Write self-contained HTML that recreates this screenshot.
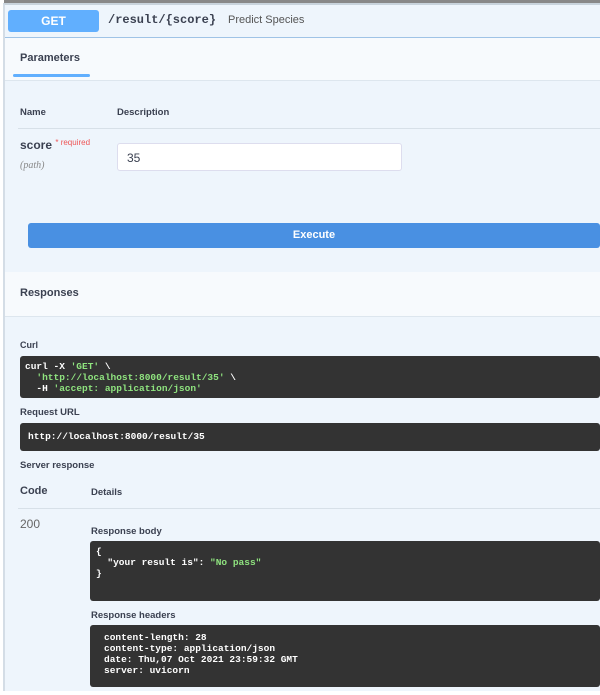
<!DOCTYPE html>
<html><head><meta charset="utf-8"><style>
*{margin:0;padding:0;box-sizing:border-box}
body{width:600px;height:695px;overflow:hidden;background:#fff;font-family:"Liberation Sans",sans-serif;color:#3b4151;position:relative}
.frame{position:absolute;left:3px;top:3px;right:0;bottom:4px;background:#eef5fc;border-left:2px solid #d4dde6;border-top:2px solid #c8d3dc}
.abs{position:absolute}
.mono{font-family:"Liberation Mono",monospace}
.dark{background:#333;border-radius:3px;position:absolute;color:#fff;font-family:"Liberation Mono",monospace;font-size:9.5px;font-weight:bold;line-height:11px}
.g{color:#8fe37f}
.lbl{position:absolute;font-size:10px;font-weight:bold;color:#3b4151}
</style></head><body>
<div class="frame"></div>
<div class="abs" style="left:4px;top:0;width:596px;height:3px;background:#888"></div>
<div class="abs" style="left:8px;top:10px;width:91px;height:22px;background:#61affe;border-radius:3px;color:#fff;font-weight:bold;font-size:12px;text-align:center;line-height:22px">GET</div>
<div class="abs mono" style="left:108px;top:13px;font-size:12px;font-weight:bold">/result/{score}</div>
<div class="abs" style="left:228px;top:14px;font-size:11px;color:#555">Predict Species</div>
<div class="abs" style="left:5px;top:37px;width:595px;height:1px;background:#9fc3e6"></div>
<div class="abs" style="left:5px;top:38px;width:595px;height:42px;background:#f7fafd"></div>
<div class="abs" style="left:20px;top:52px;font-size:11px;font-weight:bold">Parameters</div>
<div class="abs" style="left:13px;top:74px;width:77px;height:3px;background:#61affe;border-radius:2px"></div>
<div class="abs" style="left:5px;top:80px;width:595px;height:1px;background:#dde6ee"></div>
<div class="lbl" style="left:20px;top:107px;font-size:9.5px">Name</div>
<div class="lbl" style="left:117px;top:107px;font-size:9.5px">Description</div>
<div class="abs" style="left:18px;top:128px;width:582px;height:1px;background:#d7e0e8"></div>
<div class="abs" style="left:20px;top:138px;font-size:12px;font-weight:bold">score <span style="color:#e55;font-size:8px;font-weight:normal;vertical-align:top">* required</span></div>
<div class="abs" style="left:20px;top:160px;font-size:10px;font-style:italic;color:#888;font-family:'Liberation Serif',serif">(path)</div>
<div class="abs" style="left:117px;top:143px;width:285px;height:28px;background:#fff;border:1px solid #dde;border-radius:3px;font-size:12px;padding:7px 0 0 9px">35</div>
<div class="abs" style="left:28px;top:223px;width:572px;height:25px;background:#4990e2;border-radius:3px;color:#fff;font-weight:bold;font-size:11px;text-align:center;line-height:25px">Execute</div>
<div class="abs" style="left:5px;top:272px;width:595px;height:44px;background:#f7fafd"></div>
<div class="abs" style="left:20px;top:287px;font-size:11px;font-weight:bold">Responses</div>
<div class="abs" style="left:5px;top:316px;width:595px;height:1px;background:#dde6ee"></div>
<div class="lbl" style="left:20px;top:340px;font-size:9px">Curl</div>
<div class="dark" style="left:20px;top:356px;width:580px;height:42px;padding:5px 0 0 5px">curl -X <span class="g">'GET'</span> \<br>&nbsp;&nbsp;<span class="g">'http://localhost:8000/result/35'</span> \<br>&nbsp;&nbsp;-H <span class="g">'accept: application/json'</span></div>
<div class="lbl" style="left:20px;top:407px;font-size:9.5px">Request URL</div>
<div class="dark" style="left:20px;top:423px;width:580px;height:28px;padding:8px 0 0 8px">http://localhost:8000/result/35</div>
<div class="lbl" style="left:20px;top:460px;font-size:9.5px">Server response</div>
<div class="abs" style="left:20px;top:485px;font-size:11px;font-weight:bold">Code</div>
<div class="lbl" style="left:91px;top:487px;font-size:9.5px">Details</div>
<div class="abs" style="left:18px;top:508px;width:582px;height:1px;background:#d7e0e8"></div>
<div class="abs" style="left:20px;top:517px;font-size:12px;color:#666">200</div>
<div class="lbl" style="left:91px;top:526px;font-size:9.5px">Response body</div>
<div class="dark" style="left:90px;top:541px;width:510px;height:60px;padding:5px 0 0 6px">{<br>&nbsp;&nbsp;"your result is": <span class="g">"No pass"</span><br>}</div>
<div class="lbl" style="left:91px;top:610px;font-size:9.5px">Response headers</div>
<div class="dark" style="left:90px;top:625px;width:510px;height:62px;padding:7px 0 0 14px">content-length: 28<br>content-type: application/json<br>date: Thu,07 Oct 2021 23:59:32 GMT<br>server: uvicorn</div>
</body></html>
